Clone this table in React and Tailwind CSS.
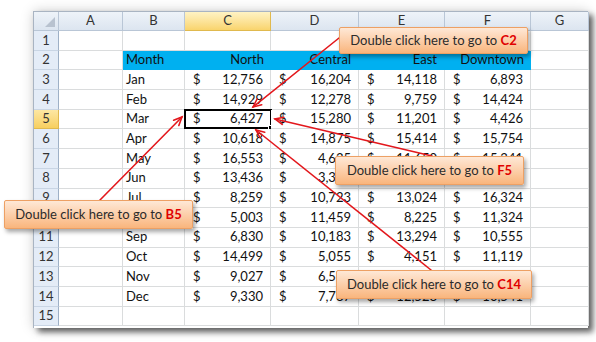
import React from "react";

const columns = ["A", "B", "C", "D", "E", "F", "G"];

const sales = [
  ["Jan", "12,756", "16,204", "14,118", "6,893"],
  ["Feb", "14,929", "12,278", "9,759", "14,424"],
  ["Mar", "6,427", "15,280", "11,201", "4,426"],
  ["Apr", "10,618", "14,875", "15,414", "15,754"],
  ["May", "16,553", "4,635", "11,650", "15,341"],
  ["Jun", "13,436", "3,318", "12,907", "9,872"],
  ["Jul", "8,259", "10,723", "13,024", "16,324"],
  ["Aug", "5,003", "11,459", "8,225", "11,324"],
  ["Sep", "6,830", "10,183", "13,294", "10,555"],
  ["Oct", "14,499", "5,055", "4,151", "11,119"],
  ["Nov", "9,027", "6,512", "15,836", "13,207"],
  ["Dec", "9,330", "7,787", "12,528", "10,541"],
];

const arrows = [
  { from: [339, 38], to: [253, 107] }, // C2
  { from: [432, 156], to: [275, 119] }, // F5
  { from: [431, 270], to: [256, 130] }, // C14
  { from: [100, 200], to: [182, 117] }, // B5
];

function ColHead({ letter }) {
  if (letter === "C") {
    return (
      <div className="flex items-center justify-center border-r border-b border-[#e0b94e] bg-gradient-to-b from-[#fff3c4] to-[#f9d46c] text-[13px] text-[#333]">
        {letter}
      </div>
    );
  }
  return (
    <div className="flex items-center justify-center border-r border-b border-[#b9c6d6] bg-gradient-to-b from-[#eef3f9] to-[#dce5f0] text-[13px] text-[#333]">
      {letter}
    </div>
  );
}

function RowHead({ n }) {
  if (n === 5) {
    return (
      <div className="flex items-center justify-center border-r border-b border-[#e0b94e] bg-gradient-to-b from-[#fde7a2] to-[#f7cf5e] text-[13px] text-[#333]">
        {n}
      </div>
    );
  }
  return (
    <div className="flex items-center justify-center border-r border-b border-r-[#9eb0c6] border-b-[#c9d5e4] bg-[#e4ecf7] text-[13px] text-[#333]">
      {n}
    </div>
  );
}

function Cell({ children, className = "" }) {
  return (
    <div className={"flex items-center border-r border-b border-[#dadcdd] bg-white text-[13px] text-[#111] " + className}>
      {children}
    </div>
  );
}

// header band of row 2: the fill hides the gridlines
function BandCell({ children, className = "" }) {
  return (
    <div className={"flex items-center border-b border-[#00b0f0] bg-[#00b0f0] text-[13px] text-[#111] " + className}>
      {children}
    </div>
  );
}

function Money({ value, selected }) {
  return (
    <div className="relative flex items-center justify-between border-r border-b border-[#dadcdd] bg-white pl-[8px] pr-[7px] text-[13px] text-[#111]">
      <span>$</span>
      <span>{value}</span>
      {selected && (
        <div className="absolute -left-[1px] -top-[1px] -right-[2px] -bottom-[1px] border-2 border-black">
          <div className="absolute -right-[4px] -bottom-[4px] h-[6px] w-[6px] border border-white bg-black" />
        </div>
      )}
    </div>
  );
}

function Sheet() {
  const rows = [];
  for (let n = 1; n <= 15; n++) {
    rows.push(<RowHead key={"h" + n} n={n} />);
    rows.push(<Cell key={"a" + n} />);
    if (n === 2) {
      rows.push(
        <BandCell key="b2" className="pl-[3px]">Month</BandCell>,
        <BandCell key="c2" className="justify-end pr-[7px]">North</BandCell>,
        <BandCell key="d2" className="justify-end pr-[8px]">Central</BandCell>,
        <BandCell key="e2" className="justify-end pr-[8px]">East</BandCell>,
        <BandCell key="f2" className="justify-end pr-[7px]">Downtown</BandCell>
      );
    } else if (n >= 3 && n <= 14) {
      const [month, ...vals] = sales[n - 3];
      rows.push(<Cell key={"b" + n} className="pl-[3px]">{month}</Cell>);
      vals.forEach((v, i) => rows.push(<Money key={n + "-" + i} value={v} selected={n === 5 && i === 0} />));
    } else {
      rows.push(<Cell key={"b" + n} />, <Cell key={"c" + n} />, <Cell key={"d" + n} />, <Cell key={"e" + n} />, <Cell key={"f" + n} />);
    }
    rows.push(<Cell key={"g" + n} />);
  }

  return (
    <div className="ml-[33px] mt-[11px] w-[555px] border-l border-t border-[#a9b4c2] bg-white pb-[2px] shadow-[5px_4px_6px_rgba(0,0,0,0.6),0_0_12px_rgba(0,0,0,0.18)]">
      <div className="grid grid-cols-[25px_64px_62px_86px_88px_86px_86px_58px] grid-rows-[19px_repeat(15,19.7px)]">
        <div className="relative border-r border-b border-[#b9c6d6] bg-gradient-to-b from-[#eef3f9] to-[#dce5f0]">
          <svg className="absolute right-[3px] bottom-[3px]" width="10" height="10" viewBox="0 0 10 10">
            <polygon points="10,0 10,10 0,10" fill="#b8c2cf" />
          </svg>
        </div>
        {columns.map((c) => (
          <ColHead key={c} letter={c} />
        ))}
        {rows}
      </div>
    </div>
  );
}

function Arrow({ from, to }) {
  const [x1, y1] = from;
  const [x2, y2] = to;
  const a = Math.atan2(y1 - y2, x1 - x2);
  const len = 9;
  const spread = 0.42;
  const p1 = [x2 + len * Math.cos(a + spread), y2 + len * Math.sin(a + spread)];
  const p2 = [x2 + len * Math.cos(a - spread), y2 + len * Math.sin(a - spread)];
  return (
    <g stroke="#e3171c" strokeWidth="1.6" strokeLinecap="round" fill="none">
      <line x1={x1} y1={y1} x2={x2} y2={y2} />
      <polyline points={`${p1[0]},${p1[1]} ${x2},${y2} ${p2[0]},${p2[1]}`} />
    </g>
  );
}

function Callout({ cell, className }) {
  return (
    <div
      className={
        "absolute flex items-center justify-center rounded-[2px] border border-[#eda064] bg-gradient-to-b from-[#fee8d6] to-[#f9b57c] text-[13px] text-[#2b2b2b] shadow-[2px_3px_4px_rgba(0,0,0,0.35)] " +
        className
      }
    >
      <span>
        Double click here to go to <span className="font-bold text-[#e00000]">{cell}</span>
      </span>
    </div>
  );
}

export default function App() {
  return (
    <div className="relative h-[342px] w-[596px] overflow-hidden bg-white font-[Lato,'Liberation_Sans',sans-serif]">
      <Sheet />

      <svg className="pointer-events-none absolute inset-0" width="596" height="342">
        {arrows.map((a, i) => (
          <Arrow key={i} from={a.from} to={a.to} />
        ))}
      </svg>

      <Callout cell="C2" className="left-[339px] top-[27px] h-[27px] w-[189px]" />
      <Callout cell="F5" className="left-[335px] top-[156px] h-[29px] w-[189px]" />
      <Callout cell="B5" className="left-[4px] top-[200px] h-[29px] w-[189px]" />
      <Callout cell="C14" className="left-[336px] top-[270px] h-[29px] w-[196px]" />
    </div>
  );
}
